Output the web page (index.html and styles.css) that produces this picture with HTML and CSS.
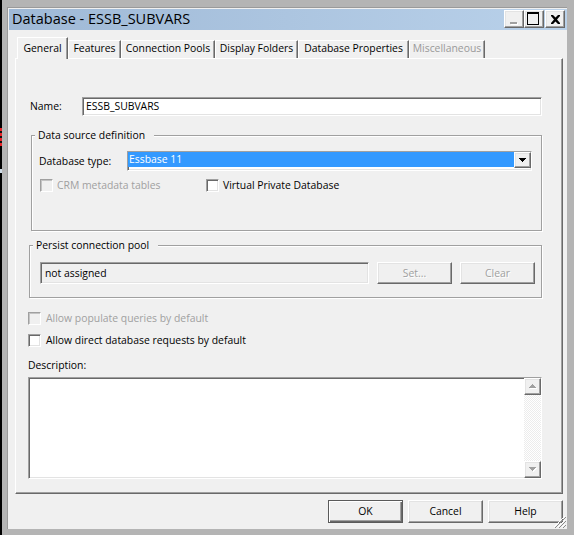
FILE: index.html
```html
<!DOCTYPE html>
<html lang="en">
<head>
<meta charset="utf-8">
<title>Database - ESSB_SUBVARS</title>
<link rel="stylesheet" href="styles.css">
</head>
<body>
<div class="desktop">
  <div class="backdrop"><span class="bd-red"></span><span class="bd-pale"></span></div>
  <div class="window">
    <div class="frame">
      <div class="caption">
        <span class="caption-text">Database - ESSB_SUBVARS</span>
        <div class="caption-buttons">
          <span class="cbtn raised">
            <svg width="18" height="16" viewBox="0 0 18 16"><rect x="6" y="12" width="7" height="2" fill="#fff"/><rect x="5" y="11" width="7" height="2" fill="#a0a0a0"/></svg>
          </span>
          <span class="cbtn raised">
            <svg width="18" height="16" viewBox="0 0 18 16" shape-rendering="crispEdges"><rect x="2.5" y="1.5" width="11" height="12" fill="none" stroke="#000"/><rect x="2" y="1" width="12" height="2" fill="#000"/></svg>
          </span>
          <span class="cbtn cbtn-close raised">
            <svg width="18" height="16" viewBox="0 0 18 16"><path d="M5 4h2l2.5 2.5L12 4h2v1l-3 3.5 3 3.5v1h-2l-2.5-2.5L7 13H5v-1l3-3.5L5 5z" fill="#000"/></svg>
          </span>
        </div>
      </div>

      <div class="client">
        <div class="tabs">
          <div class="tab tab-active w-general">General</div>
          <div class="tab w-features">Features</div>
          <div class="tab w-pools">Connection Pools</div>
          <div class="tab w-folders">Display Folders</div>
          <div class="tab w-props">Database Properties</div>
          <div class="tab tab-disabled w-misc">Miscellaneous</div>
        </div>

        <div class="panel">
          <div class="name-row">
            <span class="name-label">Name:</span>
            <div class="textbox sunken">ESSB_SUBVARS</div>
          </div>

          <div class="group group-source">
            <span class="group-title">Data source definition</span>
            <div class="dbtype-row">
              <span class="dbtype-label">Database type:</span>
              <div class="combo sunken">
                <div class="combo-value">Essbase 11</div>
                <div class="combo-button raised">
                  <svg width="7" height="4" viewBox="0 0 7 4"><path d="M0 0h7v1H6v1H5v1H4v1H3V3H2V2H1V1H0z" fill="#000"/></svg>
                </div>
              </div>
            </div>
            <div class="check-row">
              <label class="check-item check-crm disabled-text"><span class="checkbox checkbox-disabled"></span>CRM metadata tables</label>
              <label class="check-item"><span class="checkbox sunken"></span>Virtual Private Database</label>
            </div>
          </div>

          <div class="group group-pool">
            <span class="group-title">Persist connection pool</span>
            <div class="pool-row">
              <div class="pool-field sunken">not assigned</div>
              <div class="btn raised disabled-text">Set...</div>
              <div class="btn raised disabled-text">Clear</div>
            </div>
          </div>

          <label class="check-line populate-row disabled-text"><span class="checkbox checkbox-disabled"></span>Allow populate queries by default</label>
          <label class="check-line direct-row"><span class="checkbox sunken"></span>Allow direct database requests by default</label>

          <div class="desc-label">Description:</div>
          <div class="desc-box sunken">
            <div class="desc-text"></div>
            <div class="scrollbar">
              <div class="sb-btn raised">
                <svg width="8" height="5" viewBox="0 0 8 5"><path d="M4 1h1v1h1v1h1v1h1v1H1V4h1V3h1V2h1z" fill="#fff"/><path d="M3 0h1v1h1v1h1v1h1v1H0V3h1V2h1V1h1z" fill="#a0a0a0"/></svg>
              </div>
              <div class="sb-track"></div>
              <div class="sb-btn raised">
                <svg width="8" height="5" viewBox="0 0 8 5"><path d="M1 1h7v1H7v1H6v1H5v1H4V4H3V3H2V2H1z" fill="#fff"/><path d="M0 0h7v1H6v1H5v1H4v1H3V3H2V2H1V1H0z" fill="#a0a0a0"/></svg>
              </div>
            </div>
          </div>
        </div>

        <div class="dialog-buttons">
          <div class="dlg-btn dlg-default">OK</div>
          <div class="dlg-btn raised">Cancel</div>
          <div class="dlg-btn raised">Help</div>
        </div>
      </div>

      <svg class="grip" width="12" height="12" viewBox="0 0 12 12">
        <path d="M11 0L0 11M11 4L4 11M11 8L8 11" stroke="#fff" stroke-width="1"/>
        <path d="M12 1L1 12M12 5L5 12M12 9L9 12" stroke="#8a8a8a" stroke-width="1"/>
      </svg>
    </div>
  </div>
</div>
</body>
</html>
```

FILE: styles.css
```css
* { box-sizing: border-box; }
html, body { margin: 0; padding: 0; }
body {
  width: 574px;
  height: 535px;
  overflow: hidden;
  background: #000;
  font-family: "Open Sans", "Noto Sans", "Liberation Sans", sans-serif;
  font-size: 10.4px;
  line-height: 15px;
  color: #000;
}

.desktop { display: flex; width: 574px; height: 535px; }

.backdrop { width: 2px; flex: none; display: flex; flex-direction: column; }
.bd-red { margin-top: 128px; height: 18px; background: repeating-linear-gradient(to bottom, #e8262a 0 3px, #111 3px 5px); }
.bd-pale { margin-top: 23px; height: 4px; background: #cfdbe6; }

.window {
  width: 572px;
  height: 535px;
  flex: none;
  background: #b4b4b4;
  padding: 7px 7px 6px 5px;
  display: flex;
}
.frame {
  flex: 1;
  display: flex;
  flex-direction: column;
  position: relative;
  background: #f0f0f0;
  border-top: 1px solid #9a9a9a;
  border-left: 1px solid #9a9a9a;
}

/* 3D borders */
.raised {
  background: #f0f0f0;
  border: 1px solid;
  border-color: #fff #696969 #696969 #fff;
  box-shadow: inset -1px -1px 0 #a0a0a0, inset 1px 1px 0 #e3e3e3;
}
.sunken {
  border: 1px solid;
  border-color: #a0a0a0 #fff #fff #a0a0a0;
  box-shadow: inset 1px 1px 0 #696969, inset -1px -1px 0 #e3e3e3;
}
.disabled-text { color: #a0a0a0; }

/* caption */
.caption {
  height: 21px;
  flex: none;
  margin: 1px 0 0 1px;
  padding: 0 2px 0 3px;
  display: flex;
  background: linear-gradient(to right, #9fb9d6, #b9d1ea);
}
.caption-text { flex: 1; font-size: 14.5px; line-height: 19px; white-space: nowrap; }
.caption-buttons { display: flex; margin-top: 1px; height: 18px; }
.cbtn { display: block; width: 20px; height: 18px; }
.cbtn svg { display: block; }
.cbtn-close { margin-left: 1px; }

/* client */
.client { flex: 1; display: flex; flex-direction: column; padding: 7px 4px 6px 7px; }

.tabs { display: flex; align-items: flex-end; height: 21px; padding-left: 2px; flex: none; }
.tab {
  height: 18px;
  flex: none;
  border-top: 1px solid #fff;
  border-left: 1px solid #fff;
  border-right: 1px solid #696969;
  box-shadow: inset -1px 0 0 #a0a0a0;
  text-align: center;
  white-space: nowrap;
}
.tab-active {
  height: 22px;
  margin-bottom: -1px;
  padding-top: 3px;
  background: #f0f0f0;
  position: relative;
  z-index: 1;
}
.tab-disabled { color: #9a9a9a; }
.w-general { width: 51px; }
.w-features { width: 53px; }
.w-pools { width: 94px; }
.w-folders { width: 83px; }
.w-props { width: 111px; }
.w-misc { width: 76px; }

.panel {
  height: 436px;
  flex: none;
  border: 1px solid;
  border-color: #fff #696969 #696969 #fff;
  box-shadow: inset -1px -1px 0 #a0a0a0;
  padding: 38px 20px 0 12px;
  display: flex;
  flex-direction: column;
}

.name-row { display: flex; align-items: center; height: 19px; flex: none; }
.name-label { width: 54px; padding-left: 2px; }
.textbox {
  flex: 1;
  height: 19px;
  background: #fff;
  padding-left: 3px;
  display: flex;
  align-items: center;
}

.group {
  flex: none;
  border: 1px solid #a0a0a0;
  box-shadow: inset 1px 1px 0 #fff, 1px 1px 0 #fff;
  display: flex;
  flex-direction: column;
}
.group-source { margin: 19px 0 0 3px; height: 96px; }
.group-pool { margin: 14px 0 0 1px; height: 53px; }
.group-title {
  align-self: flex-start;
  margin: -8px 0 0 3px;
  padding: 0 9px 0 3px;
  background: #f0f0f0;
  white-space: nowrap;
}

.dbtype-row { display: flex; align-items: center; height: 20px; margin: 8px 9px 0 7px; }
.dbtype-label { width: 88px; flex: none; }
.combo { flex: 1; height: 20px; background: #fff; display: flex; }
.combo-value {
  flex: 1;
  height: 15px;
  background: #3399ff;
  color: #fff;
  padding-left: 1px;
}
.combo-button {
  width: 17px;
  height: 16px;
  display: flex;
  align-items: center;
  justify-content: center;
}
.combo-button svg { display: block; }

.check-row { display: flex; align-items: center; height: 13px; margin: 8px 0 0 8px; }
.check-item { display: flex; align-items: center; gap: 4px; white-space: nowrap; }
.check-crm { width: 166px; flex: none; }
.checkbox { display: block; width: 13px; height: 13px; flex: none; background: #fff; }
.checkbox-disabled {
  background: #f0f0f0;
  border: 1px solid;
  border-color: #a0a0a0 #fff #fff #a0a0a0;
  box-shadow: inset 1px 1px 0 #c4c4c4;
}

.pool-row { display: flex; height: 22px; margin: 9px 6px 0 10px; }
.pool-field { flex: 1; background: #f0f0f0; padding-left: 4px; display: flex; align-items: center; }
.btn {
  width: 75px;
  flex: none;
  margin-left: 8px;
  display: flex;
  align-items: center;
  justify-content: center;
  text-shadow: 1px 1px 0 #fff;
}

.check-line { display: flex; align-items: center; gap: 5px; height: 13px; flex: none; white-space: nowrap; }
.populate-row { margin-top: 14px; }
.direct-row { margin-top: 9px; }

.desc-label { margin-top: 11px; flex: none; }
.desc-box { margin-top: 4px; height: 102px; flex: none; background: #fff; display: flex; }
.desc-text { flex: 1; }
.scrollbar { width: 17px; display: flex; flex-direction: column; }
.sb-btn { height: 17px; flex: none; display: flex; align-items: center; justify-content: center; }
.sb-btn svg { display: block; }
.sb-track {
  flex: 1;
  background: repeating-conic-gradient(#ececec 0 25%, #fff 0 50%) 0 0 / 2px 2px;
}

.dialog-buttons { display: flex; justify-content: flex-end; gap: 5px; margin-top: 6px; height: 23px; flex: none; }
.dlg-btn {
  width: 75px;
  height: 23px;
  display: flex;
  align-items: center;
  justify-content: center;
}
.dlg-default {
  background: #f0f0f0;
  border: 1px solid #5a5a5a;
  box-shadow: inset 1px 1px 0 #fff, inset -1px -1px 0 #696969, inset -2px -2px 0 #a0a0a0;
}

.grip { position: absolute; right: 1px; bottom: 1px; display: block; }
```
